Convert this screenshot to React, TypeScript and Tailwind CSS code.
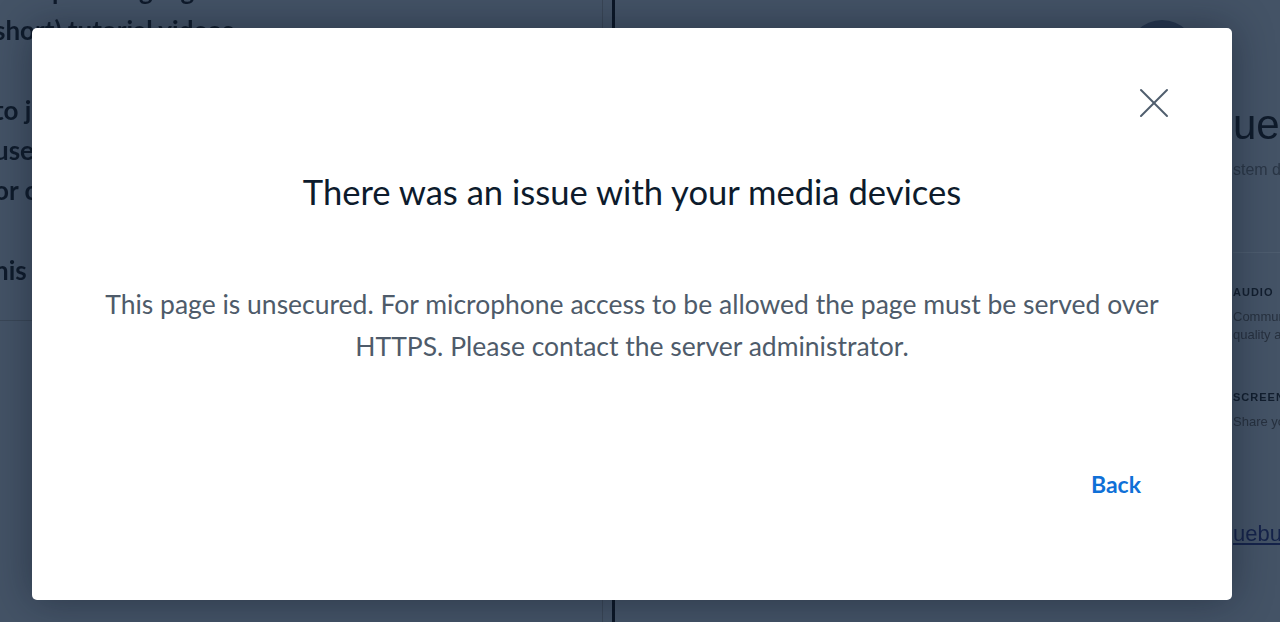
import React from "react";

export default function App() {
  return (
    <div className="relative h-[622px] w-[1280px] overflow-hidden bg-[#445366]" style={{ fontFamily: "Lato, 'Noto Sans', sans-serif" }}>
      {/* underlying page */}
      <div className="flex h-full w-full blur-[0.6px]">
        <div className="flex w-[603px] flex-col border-r border-[#3a4656]">
          <div className="-ml-[6px] flex flex-col text-[26px] font-bold leading-[40px] text-[#0f1b2b]">
            <div className="-mt-[30px]">to explore highlights of these videos</div>
            <div>short) tutorial videos</div>
            <div className="mt-[40px]">to join</div>
            <div>use</div>
            <div>or c</div>
            <div className="mt-[40px]">his</div>
          </div>
          <div className="mt-[30px] h-px w-full bg-[#3a4757]" />
        </div>
        <div className="w-[9px]" />
        <div className="w-[3px] bg-[#0b1626]" />
        <div className="flex-1" />
      </div>
      {/* right column content (underlying) */}
      <div className="pointer-events-none absolute left-[1233px] top-0 flex w-[200px] flex-col blur-[0.6px]" style={{ fontFamily: "'Liberation Sans', Arial, sans-serif" }}>
        <div className="ml-[-106px] mt-[20px] h-[70px] w-[70px] rounded-full bg-[#26364e]" />
        <div className="mt-[10px] text-[42px] leading-[50px] text-[#0f1b2b]">uebutton</div>
        <div className="mt-[10px] text-[16px] leading-[20px] text-[#2a3646]">stem designed</div>
        <div className="mt-[72px] h-px w-full bg-[#4d5c6e]" />
        <div className="mt-[32px] text-[11px] font-bold leading-[14px] tracking-[1px] text-[#121e2e]">AUDIO</div>
        <div className="mt-[9px] text-[13px] leading-[18px] text-[#27313f]">Communicate using high</div>
        <div className="text-[13px] leading-[18px] text-[#27313f]">quality audio</div>
        <div className="mt-[46px] text-[11px] font-bold leading-[14px] tracking-[1px] text-[#121e2e]">SCREEN SHARING</div>
        <div className="mt-[9px] text-[13px] leading-[18px] text-[#27313f]">Share your screen</div>
        <div className="mt-[89px] text-[22px] leading-[28px] text-[#15234a] underline">uebutton.org</div>
      </div>

      {/* modal overlay */}
      <div className="absolute inset-0 flex items-start justify-start pl-[32px] pt-[28px]">
        <div className="relative flex h-[572px] w-[1200px] flex-col items-center rounded-[5px] bg-white shadow-[0_0_40px_rgba(10,20,35,0.45)]" style={{ fontFamily: "Lato, 'Noto Sans', sans-serif" }}>
          <button className="absolute right-[63px] top-[60px] flex h-[30px] w-[30px] items-center justify-center text-[#4f5d6d]">
            <svg width="30" height="30" viewBox="0 0 30 30" fill="none" stroke="currentColor" strokeWidth="2" strokeLinecap="round">
              <line x1="2" y1="2" x2="28" y2="28" />
              <line x1="28" y1="2" x2="2" y2="28" />
            </svg>
          </button>
          <h2 className="mt-[143px] text-[34.6px] font-normal leading-[42px] text-[#0d1b2c]">There was an issue with your media devices</h2>
          <p className="mt-[70px] w-[1100px] text-center text-[26.5px] leading-[42px] text-[#4e5b6a]">
            This page is unsecured. For microphone access to be allowed the page must be served over HTTPS. Please contact the server administrator.
          </p>
          <div className="mt-[100px] flex w-full justify-end pr-[91px]">
            <button className="text-[23px] font-bold text-[#0f70d7]">Back</button>
          </div>
        </div>
      </div>
    </div>
  );
}
